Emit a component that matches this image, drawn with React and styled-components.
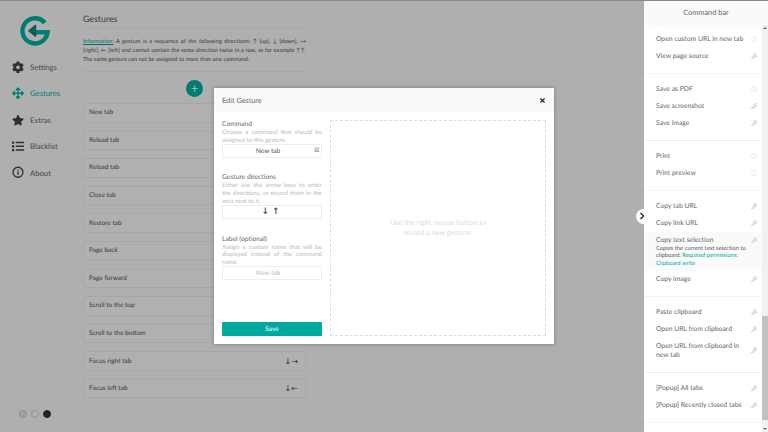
import React from 'react';
import styled, { createGlobalStyle } from 'styled-components';
import { FaCog, FaArrowsAlt, FaStar, FaList, FaKey, FaTimes } from 'react-icons/fa';
import { FiInfo } from 'react-icons/fi';

const GlobalStyle = createGlobalStyle`
	html, body {
		margin: 0;
		height: 100%;
		overflow: hidden;
		background: #fbfbfb;
	}
	body {
		font-family: Lato, "Open Sans", sans-serif;
		text-rendering: geometricPrecision;
		color: #555;
	}
	#root {
		height: 100%;
	}
`;

const gestures = [
	{ name: 'New tab' },
	{ name: 'Reload tab' },
	{ name: 'Reload tab' },
	{ name: 'Close tab' },
	{ name: 'Restore tab' },
	{ name: 'Page back' },
	{ name: 'Page forward' },
	{ name: 'Scroll to the top' },
	{ name: 'Scroll to the bottom' },
	{ name: 'Focus right tab', dirs: '↓→' },
	{ name: 'Focus left tab', dirs: '↓←' }
];

const navItems = [
	{ label: 'Settings', icon: <FaCog /> },
	{ label: 'Gestures', icon: <FaArrowsAlt />, active: true },
	{ label: 'Extras', icon: <FaStar /> },
	{ label: 'Blacklist', icon: <FaList /> },
	{ label: 'About', icon: <FiInfo strokeWidth={2.6} /> }
];

const commandGroups = [
	[
		{ name: 'Open custom URL', icon: 'info' },
		{ name: 'Open custom URL in new tab', icon: 'info' },
		{ name: 'View page source', icon: 'key' }
	],
	[
		{ name: 'Save as PDF', icon: 'info' },
		{ name: 'Save screenshot', icon: 'key' },
		{ name: 'Save image', icon: 'key' }
	],
	[
		{ name: 'Print', icon: 'info' },
		{ name: 'Print preview', icon: 'info' }
	],
	[
		{ name: 'Copy tab URL', icon: 'key' },
		{ name: 'Copy link URL', icon: 'key' },
		{ name: 'Copy text selection', icon: 'key', open: true },
		{ name: 'Copy image', icon: 'key' }
	],
	[
		{ name: 'Paste clipboard', icon: 'key' },
		{ name: 'Open URL from clipboard', icon: 'key' },
		{ name: 'Open URL from clipboard in new tab', icon: 'key' }
	],
	[
		{ name: '[Popup] All tabs', icon: 'key' },
		{ name: '[Popup] Recently closed tabs', icon: 'key' }
	]
];

function Logo() {
	return (
		<svg width="30" height="30" viewBox="0 0 30 30">
			<path
				d="M24.8 6.8A12.6 12.6 0 1 0 27.6 16.2H15"
				fill="none"
				stroke="#00b3a4"
				strokeWidth="4.4"
			/>
			<path d="M9 14.8L15.5 9.4V20.2Z" fill="#00897b" stroke="#00897b" strokeWidth="1.5" strokeLinejoin="round" />
		</svg>
	);
}

export default function App() {
	return (
		<Page>
			<GlobalStyle />
			<Sidebar>
				<LogoWrap>
					<Logo />
				</LogoWrap>
				<Nav>
					{navItems.map((item) => (
						<NavItem key={item.label} $active={item.active}>
							<NavIcon $active={item.active}>{item.icon}</NavIcon>
							{item.label}
						</NavItem>
					))}
				</Nav>
				<Dots>
					<Dot $color="#e8e8e8" $border="#ccc" />
					<Dot $color="#fff" $border="#ccc" />
					<Dot $color="#2a3442" $border="#2a3442" />
				</Dots>
			</Sidebar>

			<Main>
				<Title>Gestures</Title>
				<Info>
					<InfoLine $justify>
						<InfoLink>Information:</InfoLink> A gesture is a sequence of the following directions: ↑ [up], ↓ [down], →
					</InfoLine>
					<InfoLine $justify>
						[right], ← [left] and cannot contain the same direction twice in a row, as for example ↑↑.
					</InfoLine>
					<InfoLine>The same gesture can not be assigned to more than one command.</InfoLine>
				</Info>
				<AddButton>+</AddButton>
				<GestureList>
					{gestures.map((gesture, i) => (
						<GestureRow key={i}>
							{gesture.name}
							{gesture.dirs && <Directions>{gesture.dirs}</Directions>}
						</GestureRow>
					))}
				</GestureList>
			</Main>

			<Overlay />

			<Modal>
				<ModalHeader>
					Edit Gesture
					<CloseIcon>
						<FaTimes />
					</CloseIcon>
				</ModalHeader>
				<ModalBody>
					<Form>
						<Field>
							<FieldTitle>Command</FieldTitle>
							<FieldText>Choose a command that should be assigned to this gesture.</FieldText>
							<FieldBox>
								New tab
								<BoxMark>⛝</BoxMark>
							</FieldBox>
						</Field>
						<Field>
							<FieldTitle>Gesture directions</FieldTitle>
							<FieldText>
								Either use the arrow keys to enter the directions, or record them in the area next to it.
							</FieldText>
							<FieldBox $arrows>↓ ↑</FieldBox>
						</Field>
						<Field>
							<FieldTitle>Label (optional)</FieldTitle>
							<FieldText>Assign a custom name that will be displayed instead of the command name.</FieldText>
							<FieldBox $muted>New tab</FieldBox>
						</Field>
						<SaveButton>Save</SaveButton>
					</Form>
					<RecordArea>
						Use the right mouse button to
						<br />
						record a new gesture.
					</RecordArea>
				</ModalBody>
			</Modal>

			<Panel>
				<Toggle>
					<svg width="6" height="8" viewBox="0 0 6 8">
						<path d="M1.5 1L4.5 4L1.5 7" fill="none" stroke="#333" strokeWidth="1.5" />
					</svg>
				</Toggle>
				<PanelHeader>Command bar</PanelHeader>
				<PanelBody>
					<CommandScroll>
						{commandGroups.map((group, g) => (
							<CommandGroup key={g}>
								{group.map((command) => (
									<Command key={command.name} $open={command.open}>
										<CommandName>
											{command.name}
											{command.open && (
												<CommandDesc>
													Copies the current text selection to clipboard. <Perm>Required permissions: Clipboard write</Perm>
												</CommandDesc>
											)}
										</CommandName>
										<CommandIcon $top={command.open}>{command.icon === 'key' ? <FaKey /> : <FiInfo />}</CommandIcon>
									</Command>
								))}
							</CommandGroup>
						))}
					</CommandScroll>
					<Scrollbar>
						<ScrollArrow viewBox="0 0 6 4">
							<path d="M3 1L5 3H1Z" fill="#666" />
						</ScrollArrow>
						<ScrollThumb />
						<ScrollArrow viewBox="0 0 6 4">
							<path d="M3 3L5 1H1Z" fill="#666" />
						</ScrollArrow>
					</Scrollbar>
				</PanelBody>
			</Panel>
		</Page>
	);
}

const Page = styled.div`
	position: relative;
	display: flex;
	width: 768px;
	height: 432px;
	overflow: hidden;
	font-size: 7.5px;
	border-top: 1px solid #888;
	box-sizing: border-box;
`;

const Sidebar = styled.aside`
	display: flex;
	flex-direction: column;
	width: 83px;
	flex-shrink: 0;
	box-sizing: border-box;
	padding: 15px 0 0 12px;
`;

const LogoWrap = styled.div`
	width: 30px;
	height: 30px;
	margin: 0 0 0 8px;
`;

const Nav = styled.nav`
	display: flex;
	flex-direction: column;
	gap: 10.4px;
	margin-top: 13px;
`;

const NavItem = styled.div`
	display: flex;
	align-items: center;
	gap: 6px;
	height: 16px;
	font-size: 7.7px;
	color: ${(p) => (p.$active ? '#00b3a4' : '#666')};
`;

const NavIcon = styled.span`
	display: flex;
	justify-content: center;
	width: 12px;
	font-size: 12.5px;
	color: ${(p) => (p.$active ? '#00b3a4' : '#444')};
`;

const Dots = styled.div`
	display: flex;
	gap: 4px;
	margin: auto 0 14px 7px;
`;

const Dot = styled.span`
	width: 8px;
	height: 8px;
	border-radius: 50%;
	box-sizing: border-box;
	background: ${(p) => p.$color};
	border: 1px solid ${(p) => p.$border};
`;

const Main = styled.main`
	display: flex;
	flex-direction: column;
	width: 223px;
`;

const Title = styled.h1`
	margin: 0;
	padding: 12px 0 4px;
	font-size: 8.8px;
	font-weight: 400;
	line-height: 11px;
	border-bottom: 1px solid #eee;
	color: #555;
`;

const Info = styled.div`
	padding: 8px 0 7px;
	font-size: 5.7px;
	line-height: 9px;
	border-bottom: 1px solid #eee;
	color: #555;
`;

const InfoLine = styled.div`
	height: 9px;
	white-space: nowrap;
	text-align: ${(p) => (p.$justify ? 'justify' : 'left')};
	text-align-last: ${(p) => (p.$justify ? 'justify' : 'left')};
`;

const InfoLink = styled.span`
	color: #00a093;
	text-decoration: underline;
`;

const AddButton = styled.div`
	display: flex;
	align-items: center;
	justify-content: center;
	align-self: center;
	width: 17px;
	height: 17px;
	margin-top: 8px;
	border-radius: 50%;
	background: #00b3a4;
	color: #fff;
	font-size: 13px;
	line-height: 1;
`;

const GestureList = styled.div`
	display: flex;
	flex-direction: column;
	gap: 8.1px;
	margin-top: 6px;
`;

const GestureRow = styled.div`
	display: flex;
	align-items: center;
	justify-content: space-between;
	height: 19.5px;
	box-sizing: border-box;
	padding: 0 7px 0 5px;
	border: 1px solid #eee;
	border-radius: 2px;
	background: #fdfdfd;
	font-size: 6.5px;
	color: #555;
`;

const Directions = styled.span`
	font-size: 8px;
	font-family: "DejaVu Sans", sans-serif;
	color: #444;
`;

const Overlay = styled.div`
	position: absolute;
	inset: 0;
	background: rgba(0, 0, 0, 0.3);
`;

const Modal = styled.div`
	position: absolute;
	left: 214px;
	top: 87px;
	display: flex;
	flex-direction: column;
	width: 340px;
	height: 256px;
	background: #fff;
	box-shadow: 0 0 4px rgba(0, 0, 0, 0.3);
`;

const ModalHeader = styled.div`
	display: flex;
	align-items: center;
	justify-content: space-between;
	height: 24px;
	padding: 0 8px;
	background: #fafafa;
	font-size: 7.3px;
	color: #666;
`;

const CloseIcon = styled.span`
	display: flex;
	font-size: 7px;
	color: #333;
`;

const ModalBody = styled.div`
	display: flex;
	flex: 1;
	gap: 8px;
	padding: 8px;
`;

const Form = styled.div`
	display: flex;
	flex-direction: column;
	width: 100px;
`;

const Field = styled.div`
	margin-bottom: 15.8px;
`;

const FieldTitle = styled.div`
	font-size: 6.7px;
	line-height: 9px;
	color: #666;
`;

const FieldText = styled.div`
	font-size: 6.1px;
	line-height: 7.6px;
	text-align: justify;
	color: #bbb;
`;

const FieldBox = styled.div`
	position: relative;
	display: flex;
	align-items: center;
	justify-content: center;
	height: 13.5px;
	box-sizing: border-box;
	padding-right: ${(p) => (p.$arrows ? '3px' : '8px')};
	border: 1px solid #eee;
	font-family: ${(p) => (p.$arrows ? '"DejaVu Sans", sans-serif' : 'inherit')};
	font-size: ${(p) => (p.$arrows ? '9px' : '6.6px')};
	font-weight: ${(p) => (p.$arrows ? 700 : 400)};
	color: ${(p) => (p.$muted ? '#bbb' : '#555')};
`;

const BoxMark = styled.span`
	position: absolute;
	right: 2px;
	font-size: 6px;
	font-family: "DejaVu Sans", sans-serif;
`;

const SaveButton = styled.div`
	display: flex;
	align-items: center;
	justify-content: center;
	height: 14px;
	margin-top: auto;
	background: #00a99d;
	color: #fff;
	font-size: 6.6px;
`;

const RecordArea = styled.div`
	display: flex;
	align-items: center;
	justify-content: center;
	flex: 1;
	border: 1px dashed #ddd;
	text-align: center;
	font-size: 7.3px;
	line-height: 10px;
	color: #ddd;
`;

const Panel = styled.aside`
	position: absolute;
	top: -1px;
	right: 0;
	bottom: 0;
	display: flex;
	flex-direction: column;
	width: 124px;
	background: #fff;
`;

const Toggle = styled.div`
	position: absolute;
	left: -8px;
	top: 208.5px;
	display: flex;
	align-items: center;
	width: 15px;
	height: 15px;
	box-sizing: border-box;
	padding-left: 3px;
	border-radius: 50%;
	background: #fff;
`;

const PanelHeader = styled.div`
	position: relative;
	z-index: 1;
	display: flex;
	align-items: center;
	justify-content: center;
	flex-shrink: 0;
	height: 25px;
	background: #fafafa;
	font-size: 7.4px;
	color: #666;
`;

const PanelBody = styled.div`
	display: flex;
	flex: 1;
	min-height: 0;
`;

const CommandScroll = styled.div`
	flex: 1;
	margin-top: -11.5px;
	min-width: 0;
`;

const CommandGroup = styled.div`
	padding-bottom: 8px;
	margin-bottom: 7px;
	border-bottom: 1px solid #f3f3f3;
`;

const Command = styled.div`
	display: flex;
	align-items: ${(p) => (p.$open ? 'flex-start' : 'center')};
	justify-content: space-between;
	min-height: 16.7px;
	box-sizing: border-box;
	padding: ${(p) => (p.$open ? '4px 5px 3px 12px' : '4px 5px 4px 12px')};
	background: ${(p) => (p.$open ? '#fafafa' : 'transparent')};
`;

const CommandName = styled.div`
	font-size: 6.8px;
	line-height: 9px;
	color: #666;
`;

const CommandDesc = styled.div`
	font-size: 5.8px;
	line-height: 7.7px;
	color: #555;
`;

const Perm = styled.span`
	color: #00a99d;
`;

const CommandIcon = styled.span`
	display: flex;
	flex-shrink: 0;
	margin: ${(p) => (p.$top ? '1px 0 0 4px' : '0 0 0 4px')};
	font-size: 6.5px;
	color: #ddd;
`;

const Scrollbar = styled.div`
	display: flex;
	flex-direction: column;
	width: 6px;
	flex-shrink: 0;
	background: #f1f1f1;
`;

const ScrollArrow = styled.svg`
	width: 6px;
	height: 4px;
	flex-shrink: 0;
	margin: 1px 0;
`;

const ScrollThumb = styled.div`
	height: 104px;
	margin: auto 0 6px;
	background: #c1c1c1;
`;
